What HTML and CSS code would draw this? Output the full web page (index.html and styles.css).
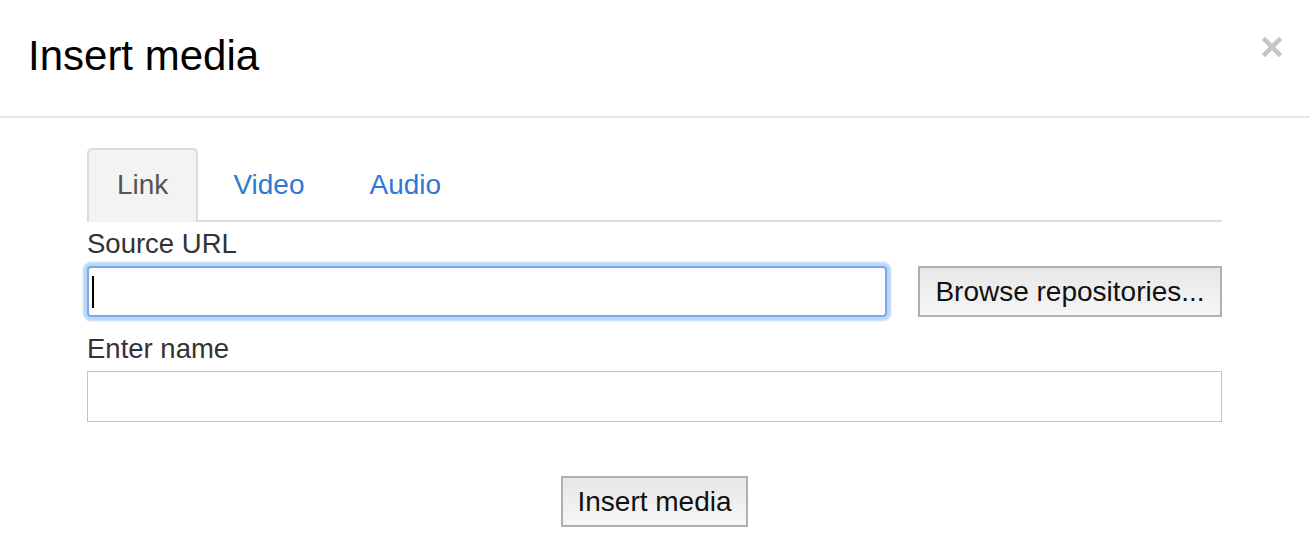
FILE: index.html
```html
<!DOCTYPE html>
<html lang="en">
<head>
<meta charset="utf-8">
<title>Insert media</title>
<link rel="stylesheet" href="styles.css">
</head>
<body>
<div class="dialog">
  <header class="dialog-header">
    <h1 class="dialog-title">Insert media</h1>
    <span class="close" aria-label="Close">
      <svg width="20" height="20" viewBox="0 0 20 20">
        <path d="M3 3 L17 17 M17 3 L3 17" stroke="#c6c6c6" stroke-width="4.6" stroke-linecap="square"/>
      </svg>
    </span>
  </header>
  <main class="dialog-body">
    <ul class="tabs">
      <li class="tab active">Link</li>
      <li class="tab">Video</li>
      <li class="tab">Audio</li>
    </ul>
    <label class="field-label">Source URL</label>
    <div class="row">
      <div class="field focused"><span class="caret"></span></div>
      <button class="btn browse">Browse repositories...</button>
    </div>
    <label class="field-label second">Enter name</label>
    <div class="field"></div>
    <div class="actions">
      <button class="btn">Insert media</button>
    </div>
  </main>
</div>
</body>
</html>
```
FILE: styles.css
```css
html, body {
  margin: 0;
  padding: 0;
  background: #fff;
}
body {
  font-family: "Liberation Sans", Arial, Helvetica, sans-serif;
  color: #333;
}
.dialog {
  width: 1310px;
}
.dialog-header {
  box-sizing: border-box;
  height: 118px;
  border-bottom: 2px solid #e5e5e5;
  padding: 35px 28px 0 28px;
  display: flex;
  justify-content: space-between;
  align-items: flex-start;
}
.dialog-title {
  margin: 0;
  font-size: 42px;
  line-height: 42px;
  font-weight: normal;
  color: #000;
}
.close {
  margin-top: 2px;
  display: block;
  width: 20px;
  height: 20px;
}
.close svg {
  display: block;
}
.dialog-body {
  padding: 30px 88px 0 87px;
}
.tabs {
  list-style: none;
  margin: 0;
  padding: 0;
  display: flex;
  border-bottom: 2px solid #dedede;
}
.tab {
  height: 70px;
  line-height: 70px;
  font-size: 28px;
  padding: 0 28px;
  border: 2px solid transparent;
  border-bottom: 0;
  margin-right: 5px;
  color: #2f78d4;
  border-radius: 5px 5px 0 0;
}
.tab.active {
  background: #f3f3f3;
  border-color: #dcdcdc;
  color: #555;
  margin-bottom: -2px;
  height: 72px;
}
.field-label {
  display: block;
  font-size: 27.5px;
  line-height: 32px;
  margin: 6px 0 6px 0;
  color: #333;
}
.field-label.second {
  margin-top: 16px;
}
.row {
  display: flex;
  gap: 31px;
}
.field {
  box-sizing: border-box;
  height: 51px;
  border: 1px solid #c4c4c4;
  background: #fff;
}
.row .field {
  flex: 1;
}
.field.focused {
  border: 2px solid #7aa8ec;
  border-radius: 4px;
  box-shadow: 0 0 2px 4px #bcd6f8;
  display: flex;
  align-items: center;
  padding-left: 3px;
}
.caret {
  display: block;
  width: 2px;
  height: 32px;
  background: #000;
}
.btn {
  box-sizing: border-box;
  height: 51px;
  padding: 0 14px;
  border: 2px solid #b0b0b0;
  background: linear-gradient(#e7e7e7, #f6f6f6);
  font-family: "Liberation Sans", Arial, Helvetica, sans-serif;
  font-size: 28px;
  color: #111;
  border-radius: 0;
}
.browse {
  width: 304px;
  flex: none;
}
.actions {
  display: flex;
  justify-content: center;
  margin-top: 54px;
}
```
